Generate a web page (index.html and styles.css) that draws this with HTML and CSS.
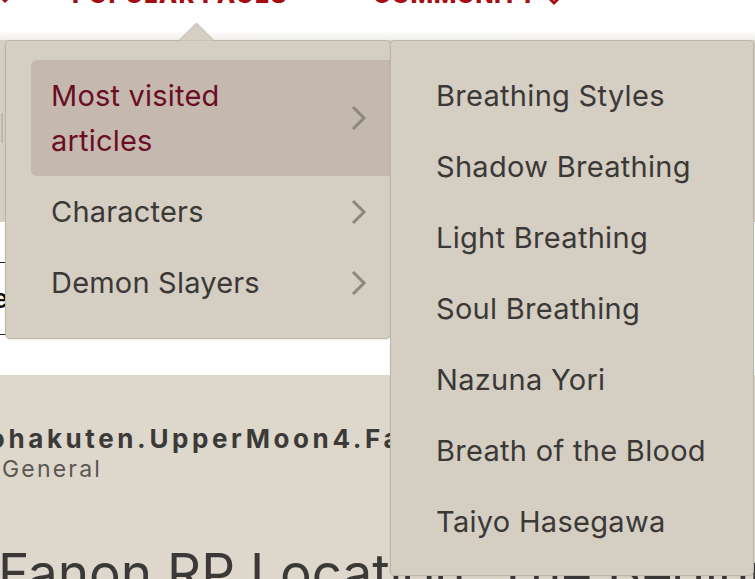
FILE: index.html
```html
<!DOCTYPE html>
<html lang="en">
<head>
<meta charset="utf-8">
<title>Popular pages</title>
<link rel="stylesheet" href="styles.css">
</head>
<body>
<header class="top">
  <nav class="nav">
    <span class="nav-item nav-prev"><svg class="nav-chev" width="10" height="8" viewBox="0 0 10 8"><path d="M1 1 L5 5 L9 1" fill="none" stroke="#a50d12" stroke-width="3"/></svg></span>
    <span class="nav-item nav-popular">POPULAR PAGES</span>
    <span class="nav-item nav-community">COMMUNITY <svg class="nav-chev" width="10" height="8" viewBox="0 0 10 8"><path d="M1 1 L5 5 L9 1" fill="none" stroke="#a50d12" stroke-width="3"/></svg></span>
  </nav>
</header>

<div class="band"><span class="band-mark"></span></div>

<div class="white-area">
  <div class="box"><span class="box-text">e</span></div>
</div>

<main class="content">
  <div class="post-author">Zohakuten.UpperMoon4.Fanon</div>
  <div class="post-board">General</div>
  <h1 class="post-title">Fanon RP Location: The Beginning</h1>
</main>

<div class="dropdown">
  <svg class="caret" width="36" height="19" viewBox="0 0 36 19"><path d="M0 18.5 L17.5 1 L35 18.5" fill="#d5cec2" stroke="#bdb5a8" stroke-width="1"/></svg>
  <ul class="menu menu-main">
    <li class="item item-active"><span class="item-label">Most visited articles</span><svg class="chev" width="16" height="26" viewBox="0 0 16 26"><path d="M2 2 L13 13 L2 24" fill="none" stroke="#8b897f" stroke-width="3"/></svg></li>
    <li class="item"><span class="item-label">Characters</span><svg class="chev" width="16" height="26" viewBox="0 0 16 26"><path d="M2 2 L13 13 L2 24" fill="none" stroke="#8b897f" stroke-width="3"/></svg></li>
    <li class="item"><span class="item-label">Demon Slayers</span><svg class="chev" width="16" height="26" viewBox="0 0 16 26"><path d="M2 2 L13 13 L2 24" fill="none" stroke="#8b897f" stroke-width="3"/></svg></li>
  </ul>
  <ul class="menu menu-sub">
    <li class="sub-item">Breathing Styles</li>
    <li class="sub-item">Shadow Breathing</li>
    <li class="sub-item">Light Breathing</li>
    <li class="sub-item">Soul Breathing</li>
    <li class="sub-item">Nazuna Yori</li>
    <li class="sub-item">Breath of the Blood</li>
    <li class="sub-item">Taiyo Hasegawa</li>
  </ul>
</div>
</body>
</html>
```

FILE: styles.css
```css
* { box-sizing: border-box; }

html, body {
  margin: 0;
  padding: 0;
}

body {
  width: 755px;
  height: 579px;
  overflow: hidden;
  position: relative;
  background: #ddd8cb;
  font-family: "Inter", "Open Sans", "Liberation Sans", sans-serif;
  color: #3a3937;
}

.top {
  height: 40px;
  background: linear-gradient(#ffffff 0, #ffffff 30px, #f1efec 40px);
  overflow: hidden;
}

.nav {
  display: flex;
  align-items: flex-start;
  margin-top: -16px;
  font-weight: 800;
  font-size: 24px;
  letter-spacing: 1.2px;
  color: #a50d12;
  line-height: 22px;
}

.nav-item {
  display: flex;
  align-items: flex-end;
  white-space: nowrap;
}

.nav-prev { width: 72px; padding-top: 12px; }
.nav-popular { width: 301px; }
.nav-community { gap: 12px; letter-spacing: 0.6px; }

.band {
  height: 182px;
  background: #d5cfc4;
  padding-top: 73px;
}

.band-mark {
  display: block;
  width: 2px;
  height: 30px;
  margin-left: 1px;
  background: #bdb6aa;
}

.white-area {
  height: 153px;
  background: #ffffff;
  padding-top: 40px;
}

.box {
  width: 8px;
  height: 73px;
  border-top: 1px solid #222;
  border-bottom: 1px solid #222;
  overflow: hidden;
  display: flex;
  justify-content: flex-end;
  align-items: center;
}

.box-text {
  font-size: 26px;
  font-weight: 600;
  color: #111;
  line-height: 1;
}

.content {
  padding-top: 49px;
  margin-left: -32px;
}

.post-author {
  font-weight: 700;
  font-size: 26px;
  letter-spacing: 3.6px;
  color: #3b3a38;
  line-height: 30px;
  white-space: nowrap;
}

.post-board {
  margin-left: 34px;
  margin-top: 2px;
  font-size: 23px;
  letter-spacing: 2.2px;
  color: #5a5752;
  line-height: 26px;
}

.post-title {
  margin: 60px 0 0 30px;
  font-weight: 400;
  font-size: 53px;
  color: #3a3937;
  line-height: 62px;
  white-space: nowrap;
}

/* dropdown overlay */
.dropdown {
  position: absolute;
  left: 5px;
  top: 40px;
  display: flex;
  align-items: flex-start;
}

.caret {
  position: absolute;
  left: 174px;
  top: -18px;
  z-index: 2;
}

.menu {
  list-style: none;
  margin: 0;
  background: #d5cec2;
  border: 1px solid #bdb5a8;
  border-radius: 5px;
  box-shadow: 0 1px 3px rgba(0,0,0,0.08);
}

.menu-main {
  width: 386px;
  padding: 19px 0 20px 25px;
}

.menu-sub {
  width: 364px;
  margin-left: -1px;
  padding: 19px 0 18px 25px;
}

.item {
  display: flex;
  align-items: center;
  justify-content: space-between;
  padding: 13px 23px 13px 20px;
  font-size: 29px;
  letter-spacing: 0.2px;
  line-height: 45px;
  color: #3a3937;
  border-radius: 6px 0 0 6px;
}

.item-label { width: 250px; }

.item-active {
  background: #c5b9af;
  color: #6a0d25;
}

.chev { flex: none; }

.sub-item {
  padding: 13px 20px;
  font-size: 29px;
  letter-spacing: 0.3px;
  line-height: 45px;
  color: #3a3937;
  white-space: nowrap;
}
```
